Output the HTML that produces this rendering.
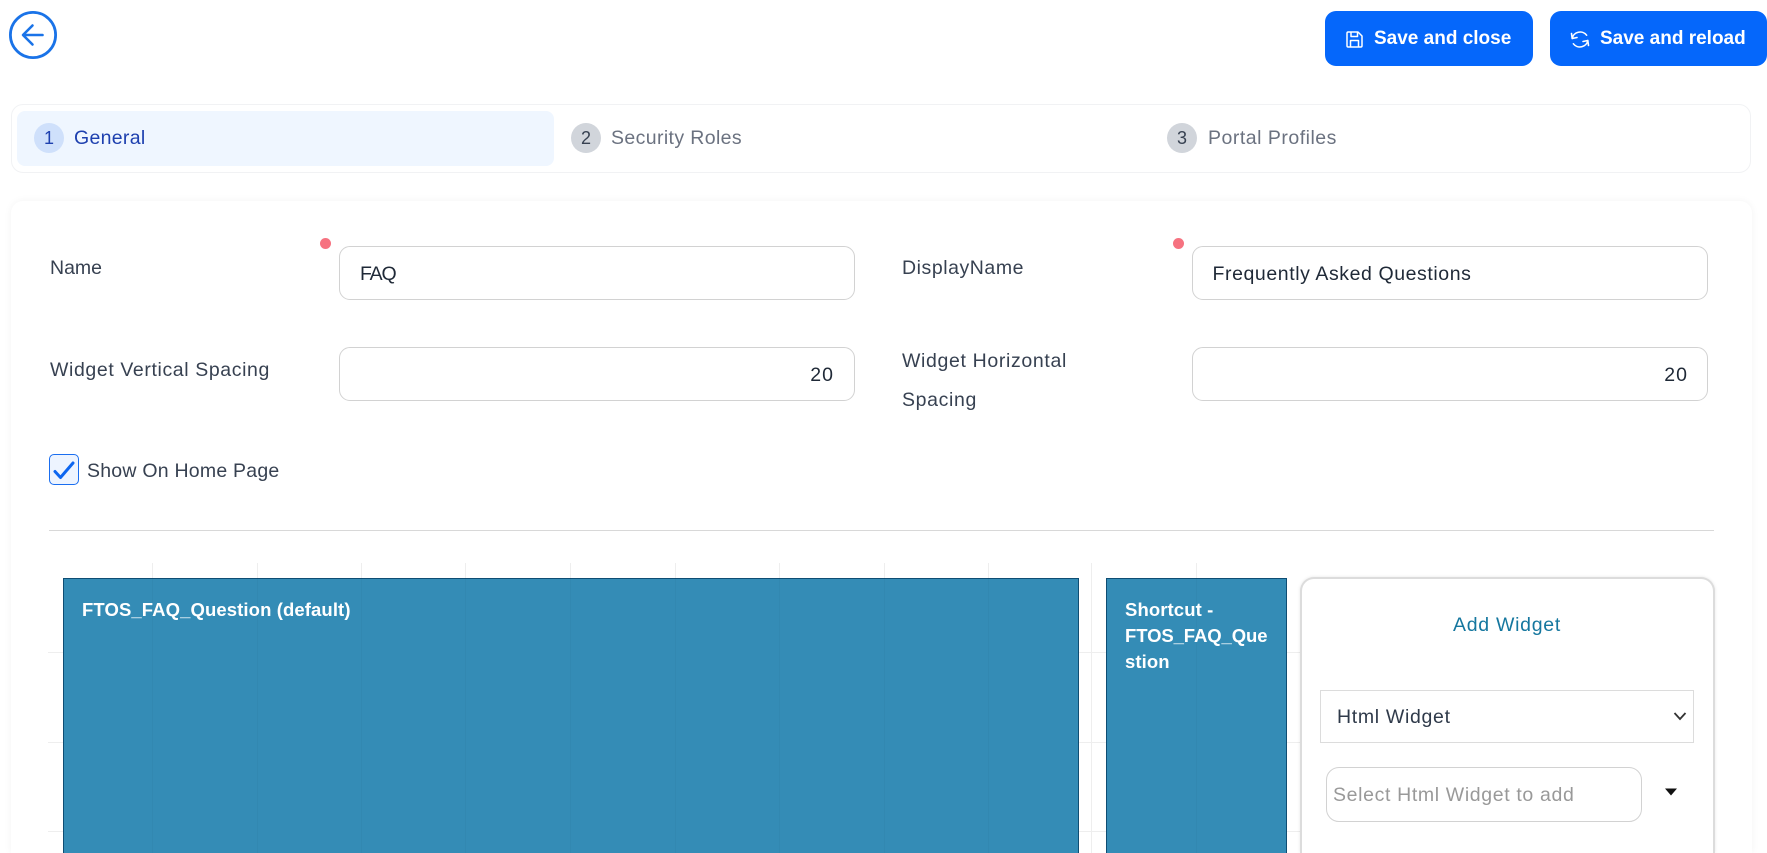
<!DOCTYPE html>
<html lang="en"><head><meta charset="utf-8"><title>Page</title>
<style>
html,body{margin:0;padding:0;background:#fff;width:1767px;height:853px;overflow:hidden}
body{font-family:"Liberation Sans",sans-serif;font-size:19.5px;color:#374151}
#p{position:relative;width:1767px;height:853px;overflow:hidden;background:#fff}
.a{position:absolute;box-sizing:border-box}
.t{position:absolute;white-space:nowrap;line-height:26px}
.btn{background:#0567fb;border-radius:11px;top:11px;height:55px}
.btnt{color:#fff;font-weight:700;top:26px;font-size:19px}
.c{width:30px;height:30px;border-radius:50%;top:123px;background:#d1d5db;text-align:center;line-height:30px;color:#374151;font-size:18px}
.inp{border:1px solid #d2d2d2;border-radius:11px;background:#fff;height:54px}
.dot{width:11px;height:11px;border-radius:50%;background:#f67280;top:238px}
.v{width:1px;top:563px;height:290px;background:#eee}
.h{height:1px;left:48px;width:1255px;background:#eee}
.w{background:#348cb6;border:1px solid #0f4d73;border-bottom:0;top:578px;height:275px}
.o{width:1px;top:578px;height:275px;background:rgba(0,0,0,.025)}
.wt{color:#fff;font-weight:700;font-size:18.5px;letter-spacing:.1px}
</style></head><body><div id="p">
<svg class="a" style="left:9px;top:11px" width="48" height="48" viewBox="0 0 48 48" fill="none" stroke="#1a73e8"><circle cx="24" cy="24" r="22.6" stroke-width="2.8"/><path d="M33.5 24H14.5M23.5 14.5 14 24 23.5 33.5" stroke-width="2.6" stroke-linecap="round" stroke-linejoin="round"/></svg>

<div class="a btn" style="left:1325px;width:208px"></div>
<svg class="a" style="left:1345px;top:30px" width="19" height="19" viewBox="0 0 19 19" fill="none" stroke="#fff" stroke-width="1.5" stroke-linejoin="round"><path d="M2 3.2C2 2.5 2.5 2 3.2 2H13L17 6V15.8C17 16.5 16.5 17 15.8 17H3.2C2.5 17 2 16.5 2 15.8Z"/><path d="M6 2V6.5H12.5V2M5.5 17V10.5H13.5V17"/></svg>
<div class="t btnt" style="left:1374px">Save and close</div>
<div class="a btn" style="left:1550px;width:217px"></div>
<svg class="a" style="left:1570px;top:30px" width="20" height="19" viewBox="0 0 20 19" fill="none" stroke="#fff" stroke-width="1.6" stroke-linecap="round" stroke-linejoin="round"><path d="M2.2 8.5A8 7.6 0 0 1 16.6 5.2M17.8 10.5A8 7.6 0 0 1 3.4 13.8"/><path d="M1.5 3.5 2.2 8.5 7 7.5M18.5 15.5 17.8 10.5 13 11.5"/></svg>
<div class="t btnt" style="left:1600px">Save and reload</div>

<div class="a" style="left:11px;top:104px;width:1740px;height:69px;border:1px solid #f1f2f4;border-radius:12px"></div>
<div class="a" style="left:17px;top:111px;width:537px;height:55px;background:#eff6ff;border-radius:8px"></div>
<div class="a c" style="left:34px;background:#cfe0fb;color:#1e40af">1</div>
<div class="t" style="left:74px;top:125px;color:#1e40af;letter-spacing:.3px">General</div>
<div class="a c" style="left:571px">2</div>
<div class="t" style="left:611px;top:125px;color:#6b7280;letter-spacing:.38px">Security Roles</div>
<div class="a c" style="left:1167px">3</div>
<div class="t" style="left:1208px;top:125px;color:#6b7280;letter-spacing:.5px">Portal Profiles</div>

<div class="a" style="left:11px;top:201px;width:1741px;height:652px;border-radius:12px 12px 0 0;background:#fff;box-shadow:0 0 8px rgba(0,0,0,.05)"></div>

<div class="t" style="left:50px;top:255px">Name</div>
<div class="a dot" style="left:320px"></div>
<div class="a inp" style="left:339px;top:246px;width:516px"></div>
<div class="t" style="left:360px;top:261px;color:#1f2937;letter-spacing:-1.2px">FAQ</div>
<div class="t" style="left:902px;top:255px;letter-spacing:.55px">DisplayName</div>
<div class="a dot" style="left:1173px"></div>
<div class="a inp" style="left:1192px;top:246px;width:516px"></div>
<div class="t" style="left:1212.5px;top:261px;color:#1f2937;letter-spacing:.58px">Frequently Asked Questions</div>

<div class="t" style="left:50px;top:357px;letter-spacing:.61px">Widget Vertical Spacing</div>
<div class="a inp" style="left:339px;top:347px;width:516px"></div>
<div class="t" style="right:933px;top:362px;color:#1f2937;letter-spacing:1px">20</div>
<div class="t" style="left:902px;top:348px;letter-spacing:.65px">Widget Horizontal</div>
<div class="t" style="left:902px;top:387px;letter-spacing:.65px">Spacing</div>
<div class="a inp" style="left:1192px;top:347px;width:516px"></div>
<div class="t" style="right:79px;top:362px;color:#1f2937;letter-spacing:1px">20</div>

<div class="a" style="left:49px;top:454px;width:30px;height:31px;border:1.5px solid #1a6ef0;border-radius:5px;background:#edf4ff"></div>
<svg class="a" style="left:49px;top:454px" width="30" height="31" viewBox="0 0 30 31" fill="none"><path d="M6 17.5 11.5 23.5 24 9" stroke="#0d66f0" stroke-width="3" stroke-linecap="round" stroke-linejoin="round"/></svg>
<div class="t" style="left:87px;top:458px;letter-spacing:.23px">Show On Home Page</div>

<div class="a" style="left:49px;top:530px;width:1665px;height:1px;background:#d8d8d8"></div>

<div class="a v" style="left:152px"></div><div class="a v" style="left:257px"></div><div class="a v" style="left:361px"></div><div class="a v" style="left:465px"></div><div class="a v" style="left:570px"></div><div class="a v" style="left:675px"></div><div class="a v" style="left:779px"></div><div class="a v" style="left:884px"></div><div class="a v" style="left:988px"></div><div class="a v" style="left:1091px"></div><div class="a v" style="left:1196px"></div>
<div class="a h" style="top:652px"></div><div class="a h" style="top:742px"></div><div class="a h" style="top:831px"></div>

<div class="a w" style="left:63px;width:1016px"></div>
<div class="a w" style="left:1106px;width:181px"></div>
<div class="a o" style="left:152px"></div><div class="a o" style="left:257px"></div><div class="a o" style="left:361px"></div><div class="a o" style="left:465px"></div><div class="a o" style="left:570px"></div><div class="a o" style="left:675px"></div><div class="a o" style="left:779px"></div><div class="a o" style="left:884px"></div><div class="a o" style="left:988px"></div><div class="a o" style="left:1196px"></div>
<div class="t wt" style="left:82px;top:597px">FTOS_FAQ_Question (default)</div>
<div class="t wt" style="left:1125px;top:597px">Shortcut -</div>
<div class="t wt" style="left:1125px;top:623px;letter-spacing:-.1px">FTOS_FAQ_Que</div>
<div class="t wt" style="left:1125px;top:649px">stion</div>

<div class="a" style="left:1300px;top:577px;width:415px;height:276px;background:#fff;border:2px solid #dcdcdc;border-bottom:0;border-radius:14px 14px 0 0;box-shadow:0 0 3px rgba(0,0,0,.1)"></div>
<div class="t" style="left:1453px;top:612px;color:#15779f;letter-spacing:.72px">Add Widget</div>
<div class="a" style="left:1320px;top:690px;width:374px;height:53px;border:1px solid #dcdcdc;background:#fff"></div>
<div class="t" style="left:1337px;top:704px;color:#2f3a4a;letter-spacing:.68px">Html Widget</div>
<svg class="a" style="left:1673px;top:711px" width="14" height="10" viewBox="0 0 14 10" fill="none"><path d="M1.5 2 7 8 12.5 2" stroke="#333" stroke-width="1.8"/></svg>
<div class="a" style="left:1326px;top:767px;width:316px;height:55px;border:1px solid #d2d2d2;border-radius:13px;background:#fff"></div>
<div class="t" style="left:1333px;top:782px;color:#999;letter-spacing:.64px">Select Html Widget to add</div>
<svg class="a" style="left:1665px;top:788px" width="12" height="8" viewBox="0 0 12 8"><path d="M0 .5H12L6 7.5Z" fill="#111"/></svg>
</div></body></html>
